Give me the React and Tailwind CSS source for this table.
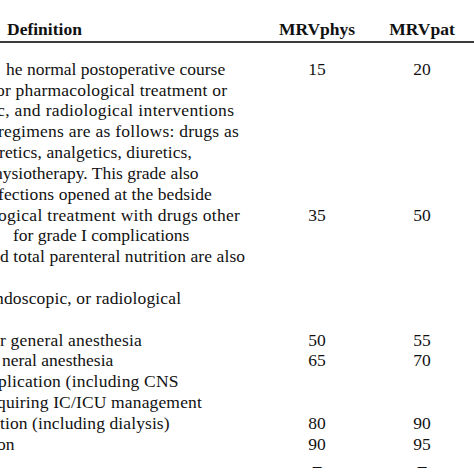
const rows = [
  {
    lines: [
      { t: "he normal postoperative course", c: "ml-[6px] tracking-[0px]" },
      { t: "or pharmacological treatment or", c: "-ml-[4px] tracking-[0.2px]" },
      { t: "c, and radiological interventions", c: "-ml-[3px] tracking-[0.36px]" },
      { t: "regimens are as follows: drugs as", c: "-ml-[2px] tracking-[0.25px]" },
      { t: "retics, analgetics, diuretics,", c: "-ml-[1px] tracking-[0.1px]" },
      { t: "hysiotherapy. This grade also", c: "-ml-[6px] tracking-[0px]" },
      { t: "fections opened at the bedside", c: "-ml-[2px] tracking-[0.1px]" },
    ],
    a: "15",
    b: "20",
  },
  {
    lines: [
      { t: "ogical treatment with drugs other", c: "-ml-[2px] tracking-[0.3px]" },
      { t: "for grade I complications", c: "ml-[13px] tracking-[0px]" },
      { t: "d total parenteral nutrition are also", c: "ml-[0px] tracking-[0.1px]" },
      { t: "\u00a0", c: "ml-[0px]" },
    ],
    a: "35",
    b: "50",
  },
  {
    lines: [
      { t: "ndoscopic, or radiological", c: "-ml-[5px] tracking-[0.15px]" },
      { t: "\u00a0", c: "ml-[0px]" },
    ],
    a: "",
    b: "",
  },
  { lines: [{ t: "r general anesthesia", c: "ml-[0px] tracking-[0.2px]" }], a: "50", b: "55" },
  { lines: [{ t: "neral anesthesia", c: "ml-[2px] tracking-[0px]" }], a: "65", b: "70" },
  {
    lines: [
      { t: "plication (including CNS", c: "-ml-[2px] tracking-[0.2px]" },
      { t: "quiring IC/ICU management", c: "-ml-[3px] tracking-[0.15px]" },
    ],
    a: "",
    b: "",
  },
  { lines: [{ t: "tion (including dialysis)", c: "ml-[0px] tracking-[0.1px]" }], a: "80", b: "90" },
  { lines: [{ t: "on", c: "-ml-[3px]" }], a: "90", b: "95" },
  { lines: [{ t: "\u00a0", c: "ml-[0px]" }], a: "\u2013", b: "\u2013" },
];

export default function App() {
  return (
    <div
      className="w-[474px] h-[474px] overflow-hidden bg-white text-[#111111] text-[17.5px] leading-[20.83px]"
      style={{ fontFamily: '"Liberation Serif", "Times New Roman", serif' }}
    >
      <div className="pt-[19px]">
        <div className="flex font-bold pb-[1.5px] border-b-2 border-[#3c3c3c]">
          <div className="flex-1 pl-[7px]">Definition</div>
          <div className="w-[106px] text-center">MRVphys</div>
          <div className="w-[104px] text-center">MRVpat</div>
        </div>
        <div className="pt-[15.5px]">
          {rows.map((r, i) => (
            <div key={i} className="flex">
              <div className="flex-1 min-w-0 flex flex-col">
                {r.lines.map((l, j) => (
                  <div key={j} className={"whitespace-nowrap " + l.c}>
                    {l.t}
                  </div>
                ))}
              </div>
              <div className="w-[106px] text-center">{r.a}</div>
              <div className="w-[104px] text-center">{r.b}</div>
            </div>
          ))}
        </div>
      </div>
    </div>
  );
}
